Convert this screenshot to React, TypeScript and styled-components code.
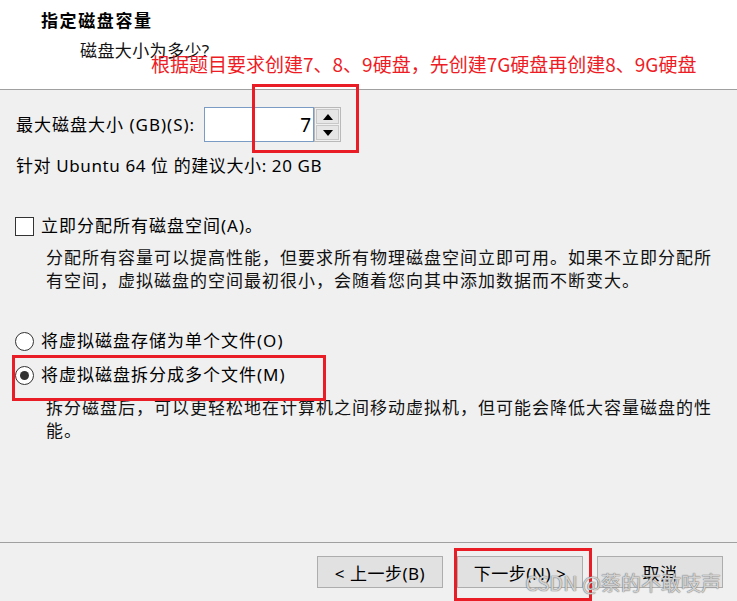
import React from "react";
import styled, { createGlobalStyle } from "styled-components";

const GlobalStyle = createGlobalStyle`
  html, body {
    margin: 0;
    padding: 0;
    background: #f0f0f0;
  }
  body {
    font-family: "Noto Sans", "Noto Sans CJK SC", sans-serif;
    color: #000;
  }
`;

const Dialog = styled.div`
  width: 737px;
  height: 601px;
  display: flex;
  flex-direction: column;
  background: #f0f0f0;
  overflow: hidden;
  font-family: "Noto Sans", "Noto Sans CJK SC", sans-serif;
`;

const Header = styled.header`
  position: relative;
  height: 89px;
  flex: none;
  background: #ffffff;
  border-bottom: 1px solid #a0a0a0;
  box-sizing: border-box;
  height: 90px;
  padding-top: 10px;
`;

const Title = styled.h1`
  margin: 0 0 0 41px;
  font-size: 17px;
  line-height: 22px;
  font-weight: 700;
  letter-spacing: 1.6px;
`;

const Subtitle = styled.div`
  margin: 8px 0 0 80px;
  font-size: 17px;
  line-height: 22px;
  letter-spacing: 0.4px;
  color: #111;
`;

const Note = styled.div`
  position: absolute;
  left: 151px;
  top: 52px;
  font-family: "Noto Sans CJK SC", sans-serif;
  font-size: 19px;
  line-height: 24px;
  color: #ee1c25;
  white-space: nowrap;
`;

const Body = styled.main`
  flex: 1;
  display: flex;
  flex-direction: column;
  padding-left: 15px;
  font-size: 17px;
  line-height: 22px;
`;

const SizeRow = styled.div`
  display: flex;
  align-items: center;
  margin-top: 17px;
  height: 35px;
`;

const FieldLabel = styled.label`
  width: 188px;
  padding-left: 1px;
  letter-spacing: 1px;
  white-space: nowrap;
`;

const SpinField = styled.div`
  position: relative;
  display: flex;
  height: 35px;
`;

const NumberBox = styled.div`
  width: 110px;
  height: 35px;
  box-sizing: border-box;
  border: 1px solid #7a9cc4;
  background: #ffffff;
  display: flex;
  align-items: center;
  justify-content: flex-end;
  padding-right: 2px;
  font-size: 19px;
`;

const SpinButtons = styled.div`
  display: flex;
  flex-direction: column;
  width: 27px;
  height: 35px;
  box-sizing: border-box;
  border: 1px solid #b9b9b9;
  background: #f0f0f0;
  padding: 1px;
  gap: 1px;
`;

const SpinButton = styled.button`
  flex: 1;
  margin: 0;
  padding: 0;
  border: 1px solid #c8c8c8;
  background: #e6e6e6;
  display: flex;
  align-items: center;
  justify-content: center;
`;

const Highlight = styled.div<{ $l: number; $t: number; $w: number; $h: number }>`
  position: absolute;
  left: ${(p) => p.$l}px;
  top: ${(p) => p.$t}px;
  width: ${(p) => p.$w}px;
  height: ${(p) => p.$h}px;
  box-sizing: border-box;
  border: 3px solid #e81d25;
  pointer-events: none;
`;

const Hint = styled.div`
  margin-top: 13px;
  padding-left: 1px;
  letter-spacing: 0.6px;
`;

const OptionRow = styled.div<{ $gap: number }>`
  position: relative;
  display: flex;
  align-items: center;
  gap: 7px;
  margin-top: ${(p) => p.$gap}px;
  height: 22px;
  letter-spacing: 1px;
  white-space: nowrap;
`;

const CheckBox = styled.span`
  width: 19px;
  height: 19px;
  box-sizing: border-box;
  border: 1px solid #333;
  background: #fff;
  flex: none;
`;

const Radio = styled.span<{ $on?: boolean }>`
  width: 19px;
  height: 19px;
  box-sizing: border-box;
  border: 1px solid #333;
  border-radius: 50%;
  background: #fff;
  flex: none;
  display: flex;
  align-items: center;
  justify-content: center;
  &::after {
    content: "";
    display: ${(p) => (p.$on ? "block" : "none")};
    width: 9px;
    height: 9px;
    border-radius: 50%;
    background: #333;
  }
`;

const Description = styled.p<{ $gap: number }>`
  margin: ${(p) => p.$gap}px 0 0 31px;
  width: 670px;
  line-height: 23px;
  letter-spacing: 1px;
  color: #111;
`;

const Footer = styled.footer`
  position: relative;
  flex: none;
  height: 59px;
  box-sizing: border-box;
  border-top: 1px solid #a0a0a0;
  display: flex;
  justify-content: flex-end;
  align-items: flex-start;
  gap: 14px;
  padding: 13px 14px 0 0;
`;

const ButtonSlot = styled.div`
  position: relative;
`;

const WizardButton = styled.button`
  width: 126px;
  height: 32px;
  box-sizing: border-box;
  border: 1px solid #adadad;
  background: #e1e1e1;
  font-family: "Noto Sans", "Noto Sans CJK SC", sans-serif;
  font-size: 17px;
  color: #000;
  padding: 0;
  letter-spacing: 0.5px;
`;

const Watermark = styled.div`
  position: absolute;
  right: 16px;
  bottom: 5px;
  font-family: "Noto Sans CJK SC", sans-serif;
  font-size: 20px;
  line-height: 26px;
  color: rgba(255, 255, 255, 0.7);
  text-shadow: 0 0 1px #6a6a6a, 0 0 1px #6a6a6a;
  white-space: nowrap;
  pointer-events: none;
`;

const Arrow = ({ up }: { up?: boolean }) => (
  <svg width="10" height="6" viewBox="0 0 10 6">
    <path d={up ? "M0 6 L5 0 L10 6 Z" : "M0 0 L5 6 L10 0 Z"} fill="#000" />
  </svg>
);

export default function App() {
  return (
    <>
      <GlobalStyle />
      <Dialog>
        <Header>
          <Title>指定磁盘容量</Title>
          <Subtitle>磁盘大小为多少?</Subtitle>
          <Note>根据题目要求创建7、8、9硬盘，先创建7G硬盘再创建8、9G硬盘</Note>
        </Header>

        <Body>
          <SizeRow>
            <FieldLabel>最大磁盘大小 (GB)(S):</FieldLabel>
            <SpinField>
              <NumberBox>7</NumberBox>
              <SpinButtons>
                <SpinButton aria-label="增加">
                  <Arrow up />
                </SpinButton>
                <SpinButton aria-label="减少">
                  <Arrow />
                </SpinButton>
              </SpinButtons>
              <Highlight $l={48} $t={-23} $w={107} $h={69} />
            </SpinField>
          </SizeRow>

          <Hint>针对 Ubuntu 64 位 的建议大小: 20 GB</Hint>

          <OptionRow $gap={38}>
            <CheckBox />
            立即分配所有磁盘空间(A)。
          </OptionRow>
          <Description $gap={9}>
            分配所有容量可以提高性能，但要求所有物理磁盘空间立即可用。如果不立即分配所有空间，虚拟磁盘的空间最初很小，会随着您向其中添加数据而不断变大。
          </Description>

          <OptionRow $gap={38}>
            <Radio />
            将虚拟磁盘存储为单个文件(O)
          </OptionRow>
          <OptionRow $gap={12}>
            <Radio $on />
            将虚拟磁盘拆分成多个文件(M)
            <Highlight $l={-3} $t={-9} $w={314} $h={46} />
          </OptionRow>
          <Description $gap={10}>
            拆分磁盘后，可以更轻松地在计算机之间移动虚拟机，但可能会降低大容量磁盘的性能。
          </Description>
        </Body>

        <Footer>
          <ButtonSlot>
            <WizardButton>&lt; 上一步(B)</WizardButton>
          </ButtonSlot>
          <ButtonSlot>
            <WizardButton>下一步(N) &gt;</WizardButton>
            <Highlight $l={-3} $t={-8} $w={138} $h={53} />
          </ButtonSlot>
          <ButtonSlot>
            <WizardButton>取消</WizardButton>
          </ButtonSlot>
          <Watermark>CSDN @蔡的不敢吱声</Watermark>
        </Footer>
      </Dialog>
    </>
  );
}
